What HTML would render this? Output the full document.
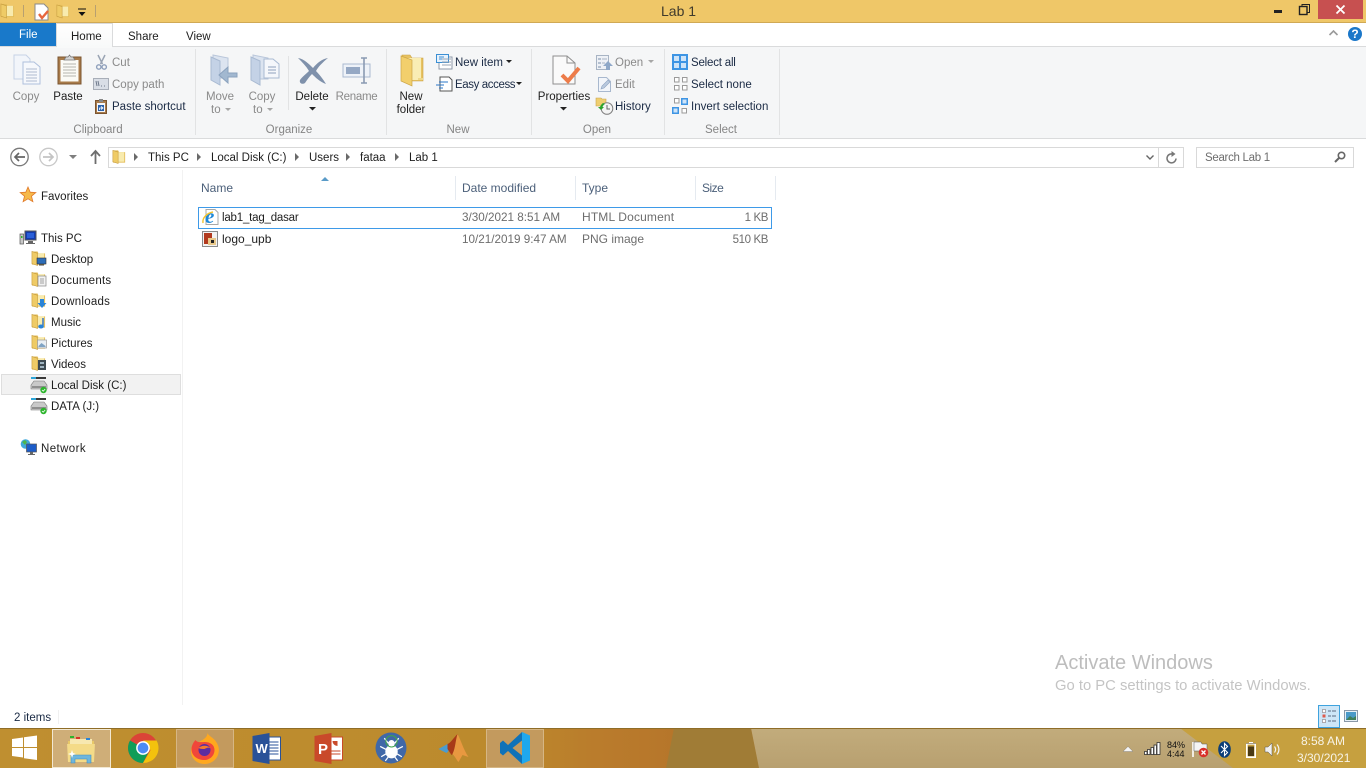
<!DOCTYPE html>
<html lang="en"><head><meta charset="utf-8"><title>Lab 1</title>
<style>
html,body{margin:0;padding:0;width:1366px;height:768px;overflow:hidden;background:#fff;font-family:"Liberation Sans",sans-serif;font-size:12px;color:#1e1e1e}
.a{position:absolute}
.t{position:absolute;white-space:nowrap;line-height:16px;font-size:11.5px;color:#1e1e1e;margin-top:1px}
.f12{font-size:12px;margin-top:0}
.g{color:#8a8a8a}
.l{color:#858585}
.c{text-align:center;transform:translateX(-50%)}
.h{color:#4c607a;font-size:12px;margin-top:0}
.d{color:#6d6d6d}
.n{color:#1a2a44}
svg{position:absolute;overflow:visible}
</style></head><body>
<svg width="0" height="0" style="position:absolute"><defs>
<symbol id="fld" viewBox="0 0 16 16">
<path d="M1 1h6l1 2h7v12H1z" fill="#E3BC58"/>
<path d="M5 3h9v11H5z" fill="#F8EBAE"/>
<path d="M1 1l6 2v13L1 14z" fill="#EFCB66" stroke="#C49A3E" stroke-width=".6"/>
</symbol>
<symbol id="drv" viewBox="0 0 18 18">
<rect x="1" y="1" width="15" height="2" fill="#3a3a3a"/><rect x="1" y="1" width="5" height="2" fill="#2FA6D8"/>
<path d="M1 9l3-4h10l3 4v4H1z" fill="#C9C9C9" stroke="#777" stroke-width=".6"/>
<rect x="2" y="10" width="14" height="2" fill="#8f8f8f"/>
<circle cx="13.500" cy="14" r="3.200" fill="#2DB52D"/><path d="M12 14l1.200 1.200 2-2.200" stroke="#fff" stroke-width=".8" fill="none"/>
</symbol>
<linearGradient id="tb1" gradientUnits="userSpaceOnUse" x1="0" x2="700" y1="0" y2="0"><stop offset="0" stop-color="#BF8F30"/><stop offset=".72" stop-color="#BC8A2D"/><stop offset=".85" stop-color="#BA7C2C"/><stop offset="1" stop-color="#B5742A"/></linearGradient>
<linearGradient id="tb2" x1="0" x2="0" y1="0" y2="1"><stop offset="0" stop-color="#C2AC7C"/><stop offset="1" stop-color="#B8A070"/></linearGradient>
</defs></svg>

<!-- Title bar -->
<div class="a" style="left:0;top:0;width:1366px;height:22px;background:#EFC768"></div>
<div class="a" style="left:0;top:22px;width:1366px;height:1px;background:#D0A955"></div>
<svg style="left:0;top:2px" width="16" height="18"><use href="#fld" width="15" height="17"/></svg>
<div class="a" style="left:23px;top:5px;width:1px;height:12px;background:#B8A070"></div>
<svg style="left:34px;top:3px" width="16" height="18" viewBox="0 0 16 18"><path d="M1 1h9l4 4v12H1z" fill="#fff" stroke="#8a8a8a"/><path d="M5 11l3 4 6-7" fill="none" stroke="#E8663C" stroke-width="2.400"/></svg>
<svg style="left:56px;top:3px" width="15" height="17"><use href="#fld" width="14" height="16"/></svg>
<svg style="left:77px;top:8px" width="10" height="9"><path d="M1 1h8" stroke="#111"/><path d="M1.500 4h7L5 8z" fill="#111"/></svg>
<div class="a" style="left:95px;top:5px;width:1px;height:12px;background:#B8A070"></div>
<div class="t" style="left:661px;top:3px;font-size:14px;color:#3f3a2c;margin-top:0">Lab 1</div>
<div class="a" style="left:1274px;top:10px;width:8px;height:3px;background:#222"></div>
<svg style="left:1299px;top:4px" width="11" height="11"><path d="M3 2.500V.5h7.500v8H8" fill="none" stroke="#222"/><rect x=".5" y="2.500" width="7.500" height="8" fill="none" stroke="#222" stroke-width="1.400"/></svg>
<div class="a" style="left:1318px;top:0;width:45px;height:19px;background:#C75050"></div>
<svg style="left:1336px;top:5px" width="9" height="9"><path d="M.5.5l8 8M8.500.5l-8 8" stroke="#fff" stroke-width="1.800"/></svg>

<!-- Tabs -->
<div class="a" style="left:0;top:23px;width:56px;height:23px;background:#1979CA"></div>
<div class="t" style="left:19px;top:26px;color:#fff">File</div>
<div class="a" style="left:56px;top:23px;width:57px;height:24px;border:1px solid #DADBDC;border-bottom:0;box-sizing:border-box;background:linear-gradient(#fff,#F8F9F9)"></div>
<div class="t" style="left:71px;top:28px">Home</div>
<div class="t" style="left:128px;top:28px">Share</div>
<div class="t" style="left:186px;top:28px">View</div>
<svg style="left:1329px;top:30px" width="9" height="6"><path d="M.5 5l4-4 4 4" fill="none" stroke="#9a9a9a" stroke-width="1.600"/></svg>
<div class="a" style="left:1348px;top:27px;width:14px;height:14px;border-radius:50%;background:#1B77C9;color:#fff;font-weight:bold;font-size:12px;line-height:14px;text-align:center">?</div>

<!-- Ribbon -->
<div class="a" style="left:0;top:46px;width:1366px;height:92px;background:#F5F6F7;border-top:1px solid #DADBDC;box-sizing:border-box"></div>
<div class="a" style="left:57px;top:46px;width:55px;height:2px;background:#F8F9F9"></div>
<div class="a" style="left:0;top:138px;width:1366px;height:1px;background:#DADBDC"></div>
<div class="a" style="left:195px;top:49px;width:1px;height:86px;background:#E2E3E4"></div>
<div class="a" style="left:386px;top:49px;width:1px;height:86px;background:#E2E3E4"></div>
<div class="a" style="left:531px;top:49px;width:1px;height:86px;background:#E2E3E4"></div>
<div class="a" style="left:664px;top:49px;width:1px;height:86px;background:#E2E3E4"></div>
<div class="a" style="left:779px;top:49px;width:1px;height:86px;background:#E2E3E4"></div>
<div class="a" style="left:288px;top:56px;width:1px;height:54px;background:#E2E3E4"></div>

<!-- Clipboard icons -->
<svg style="left:13px;top:54px" width="28" height="31" viewBox="0 0 28 31"><path d="M1 1h12l4 4v20H1z" fill="#F2F5FA" stroke="#C6D2E6"/><path d="M10 8h11l6 5v17H10z" fill="#F6F8FC" stroke="#AFC0DC"/><path d="M13 15h11M13 18h11M13 21h11M13 24h11M13 27h11" stroke="#AFBAD0"/></svg>
<svg style="left:57px;top:54px" width="25" height="31" viewBox="0 0 25 31"><rect x="1" y="3" width="23" height="27" fill="#A87B4A" stroke="#7C5530"/><rect x="3.500" y="6" width="18" height="21.500" fill="#FBFBF6"/><path d="M6 10h13M6 13h13M6 16h13M6 19h13M6 22h13" stroke="#B5B5AE"/><path d="M7 6l2-3h2l1.500-2 1.500 2h2l2 3z" fill="#D6D6D6" stroke="#777" stroke-width=".7"/></svg>
<svg style="left:96px;top:55px" width="11" height="15" viewBox="0 0 11 15"><path d="M2 0l4.500 9M9 0L4.500 9" stroke="#9AA4B4" stroke-width="1.500"/><circle cx="2.800" cy="12" r="2.200" fill="none" stroke="#8FA0BC" stroke-width="1.400"/><circle cx="8.200" cy="12" r="2.200" fill="none" stroke="#8FA0BC" stroke-width="1.400"/></svg>
<div class="t g" style="left:112px;top:54px">Cut</div>
<svg style="left:93px;top:78px" width="16" height="12" viewBox="0 0 16 12"><rect x=".5" y=".5" width="15" height="11" fill="#D9DEE6" stroke="#A8AEB8"/><path d="M3 3l1 5M5 3l1 5M8 8h1M11 8h1" stroke="#6F7A8C"/></svg>
<div class="t g" style="left:112px;top:76px">Copy path</div>
<svg style="left:95px;top:99px" width="12" height="15" viewBox="0 0 12 15"><rect x=".5" y="1.500" width="11" height="13" fill="#A87B4A" stroke="#7C5530"/><rect x="2" y="4" width="8" height="9" fill="#F5F6FA"/><rect x="3" y="6" width="6" height="6" fill="#2A60A8"/><path d="M4.500 11V9h2.500M6 7.500L8 9 6 10.500" fill="none" stroke="#fff" stroke-width=".8"/><rect x="4" y="0" width="4" height="3" fill="#888"/></svg>
<div class="t n" style="left:112px;top:98px">Paste shortcut</div>
<div class="t g c" style="left:26px;top:88px">Copy</div>
<div class="t c" style="left:68px;top:88px">Paste</div>
<div class="t l c" style="left:98px;top:121px">Clipboard</div>

<!-- Organize icons -->
<svg style="left:210px;top:54px" width="28" height="33" viewBox="0 0 28 33"><path d="M3 1l15 3v20H3z" fill="#DCE4F0" stroke="#B9C6DA"/><path d="M1 3l9 4v24l-9-5z" fill="#C4D2E6" stroke="#A9BAD2"/><path d="M27 19h-9v-6l-9 8 9 8v-6h9z" fill="#A2B8D0" stroke="#8BA2BE"/></svg>
<svg style="left:250px;top:54px" width="30" height="33" viewBox="0 0 30 33"><path d="M3 1l15 3v21H3z" fill="#DCE4F0" stroke="#B9C6DA"/><path d="M1 3l9 4v24l-9-5z" fill="#C4D2E6" stroke="#A9BAD2"/><path d="M14 5h9l6 5v14H14z" fill="#F5F7FB" stroke="#A9BAD2"/><path d="M18 13h8M18 16h8M18 19h8" stroke="#8EA2BE"/></svg>
<svg style="left:298px;top:57px" width="30" height="28" viewBox="0 0 30 28"><path d="M0 1C6 2 11 7 15 11 19 6 24 2 30 1 25 5 20 10 18 14c3 3 7 8 10 13C22 25 17 20 14 17 11 20 9 23 7 26c-3 2-6 0-5-3 2-3 6-6 9-9C8 9 4 5 0 1z" fill="#7F91AB"/></svg>
<svg style="left:342px;top:57px" width="30" height="27" viewBox="0 0 30 27"><rect x="1" y="7" width="27" height="13" fill="#EEF2F8" stroke="#AAB9D0"/><rect x="4" y="10" width="14" height="7" fill="#95A8C4"/><path d="M19 1h6M22 1v25M19 26h6" stroke="#8A9AB2" stroke-width="1.600"/></svg>
<div class="t g c" style="left:220px;top:88px">Move</div>
<div class="t g" style="left:211px;top:101px">to</div>
<svg style="left:225px;top:108px" width="6" height="4"><path d="M0 0h6L3 3z" fill="#A6A6A6"/></svg>
<div class="t g c" style="left:262px;top:88px">Copy</div>
<div class="t g" style="left:253px;top:101px">to</div>
<svg style="left:267px;top:108px" width="6" height="4"><path d="M0 0h6L3 3z" fill="#A6A6A6"/></svg>
<div class="t c" style="left:312px;top:88px">Delete</div>
<svg style="left:309px;top:107px" width="7" height="4"><path d="M0 0h7L3.500 3.500z" fill="#222"/></svg>
<div class="t g c" style="left:356.500px;top:88px;letter-spacing:-.3px">Rename</div>
<div class="t l c" style="left:289px;top:121px">Organize</div>

<!-- New -->
<svg style="left:400px;top:54px" width="24" height="33" viewBox="0 0 24 33"><path d="M2 1h8l2 3h11v23H2z" fill="#E7C262" stroke="#C9A040" stroke-width=".6"/><path d="M6 4h15v22H6z" fill="#F9EDB4"/><path d="M1 2l11 4v26L1 27z" fill="#F2CF6C" stroke="#CDA648" stroke-width=".7"/><rect x="18" y="24" width="5" height="2" fill="#EFD98A"/></svg>
<svg style="left:436px;top:54px" width="17" height="16" viewBox="0 0 17 16"><rect x="3" y="3" width="13" height="12" fill="#fff" stroke="#8F9AAA"/><rect x=".5" y=".5" width="12" height="8" fill="#E8F2FB" stroke="#3B8FD4"/><path d="M6 5h9M6 8h9M6 11h9" stroke="#9AA5B4"/><path d="M3 3h5M3 5h3" stroke="#3B8FD4"/></svg>
<div class="t n" style="left:455px;top:54px">New item</div>
<svg style="left:506px;top:60px" width="6" height="4"><path d="M0 0h6L3 3z" fill="#222"/></svg>
<svg style="left:436px;top:76px" width="17" height="16" viewBox="0 0 17 16"><path d="M4 1h9l3 3v11H4z" fill="#fff" stroke="#555"/><path d="M0 9h8M3 6h9M3 12h4" stroke="#2A77C8" stroke-width="1.100"/></svg>
<div class="t n" style="left:455px;top:76px;letter-spacing:-.4px">Easy access</div>
<svg style="left:516px;top:82px" width="6" height="4"><path d="M0 0h6L3 3z" fill="#222"/></svg>
<div class="t c" style="left:411px;top:88px">New</div>
<div class="t c" style="left:411px;top:101px">folder</div>
<div class="t l c" style="left:458px;top:121px">New</div>

<!-- Open -->
<svg style="left:552px;top:56px" width="30" height="30" viewBox="0 0 30 30"><path d="M1 0h14l8 7v21H1z" fill="#FAFAFA" stroke="#8F8F8F"/><path d="M15 0v7h8" fill="none" stroke="#8F8F8F"/><path d="M10 19l6 6L27 12" fill="none" stroke="#ED7C4A" stroke-width="4"/></svg>
<div class="t c" style="left:564px;top:88px">Properties</div>
<svg style="left:560px;top:107px" width="7" height="4"><path d="M0 0h7L3.500 3.500z" fill="#222"/></svg>
<svg style="left:596px;top:55px" width="17" height="15" viewBox="0 0 17 15"><rect x=".5" y=".5" width="12" height="14" fill="#EEF1F6" stroke="#A8B4C4"/><path d="M2 3h3v2H2zM2 7h3v2H2zM2 11h3v2H2z" fill="#B4C0D0"/><path d="M6 4h5M6 8h3" stroke="#A8B4C4"/><path d="M12 6l5 5h-3v4h-4v-4H7z" fill="#8FA8C8"/></svg>
<div class="t g" style="left:615px;top:54px">Open</div>
<svg style="left:648px;top:60px" width="6" height="4"><path d="M0 0h6L3 3z" fill="#A6A6A6"/></svg>
<svg style="left:598px;top:77px" width="13" height="15" viewBox="0 0 13 15"><path d="M.5.5h8l4 4v10H.5z" fill="#F2F5FA" stroke="#A8B8CE"/><path d="M3 12l1-3 6-6 2 2-6 6z" fill="#B9C9DE" stroke="#8DA2C0" stroke-width=".6"/></svg>
<div class="t g" style="left:615px;top:76px">Edit</div>
<svg style="left:596px;top:98px" width="18" height="17" viewBox="0 0 18 17"><path d="M0 0h5l1 1h4v7H0z" fill="#EFCF70" stroke="#C9A24C" stroke-width=".6"/><circle cx="11" cy="10.500" r="5.800" fill="#F4F4F4" stroke="#7F7F7F"/><path d="M11 7v4h3" fill="none" stroke="#666"/><path d="M2 9l3 3 3-3H6.500C7 7.500 8 6.500 9 6L7 5C5.500 6 4.500 7.500 4 9z" fill="#2DA32D"/></svg>
<div class="t n" style="left:615px;top:98px">History</div>
<div class="t l c" style="left:597px;top:121px">Open</div>

<!-- Select -->
<svg style="left:672px;top:54px" width="16" height="16" viewBox="0 0 16 16"><rect width="16" height="16" fill="#3E95E4"/><rect x="2" y="2" width="5" height="5" fill="#CFE4F8"/><rect x="9" y="2" width="5" height="5" fill="#CFE4F8"/><rect x="2" y="9" width="5" height="5" fill="#CFE4F8"/><rect x="9" y="9" width="5" height="5" fill="#CFE4F8"/></svg>
<div class="t n" style="left:691px;top:54px;letter-spacing:-.2px">Select all</div>
<svg style="left:674px;top:77px" width="14" height="14" viewBox="0 0 14 14"><g fill="#fff" stroke="#9A9A9A"><rect x=".5" y=".5" width="4.500" height="4.500"/><rect x="8.500" y=".5" width="4.500" height="4.500"/><rect x=".5" y="8.500" width="4.500" height="4.500"/><rect x="8.500" y="8.500" width="4.500" height="4.500"/></g></svg>
<div class="t n" style="left:691px;top:76px">Select none</div>
<svg style="left:672px;top:98px" width="16" height="16" viewBox="0 0 16 16"><rect x="2.500" y=".5" width="4.500" height="4.500" fill="#fff" stroke="#9A9A9A"/><rect x="9" y="0" width="7" height="7" fill="#3E95E4"/><rect x="10.500" y="1.500" width="4" height="4" fill="#CFE4F8"/><rect x="0" y="9" width="7" height="7" fill="#3E95E4"/><rect x="1.500" y="10.500" width="4" height="4" fill="#CFE4F8"/><rect x="10" y="10.500" width="4.500" height="4.500" fill="#fff" stroke="#9A9A9A"/></svg>
<div class="t n" style="left:691px;top:98px">Invert selection</div>
<div class="t l c" style="left:721px;top:121px">Select</div>

<!-- Address row -->
<svg style="left:10px;top:147px" width="20" height="20" viewBox="0 0 20 20"><circle cx="9.500" cy="10" r="8.700" fill="#fff" stroke="#7A7A7A" stroke-width="1.300"/><path d="M15 10H5M9 6l-4 4 4 4" fill="none" stroke="#666" stroke-width="1.700"/></svg>
<svg style="left:39px;top:147px" width="20" height="20" viewBox="0 0 20 20"><circle cx="9.500" cy="10" r="8.700" fill="#fff" stroke="#C8C8C8" stroke-width="1.300"/><path d="M4 10h10M10 6l4 4-4 4" fill="none" stroke="#C4C4C4" stroke-width="1.700"/></svg>
<svg style="left:69px;top:155px" width="8" height="5"><path d="M0 0h8L4 4z" fill="#7F7F7F"/></svg>
<svg style="left:90px;top:150px" width="11" height="14" viewBox="0 0 11 14"><path d="M5.500 14V2M1 6l4.500-5L10 6" fill="none" stroke="#6D6D6D" stroke-width="1.800"/></svg>
<div class="a" style="left:108px;top:147px;width:1076px;height:21px;border:1px solid #D9D9D9;box-sizing:border-box;background:#fff"></div>
<div class="a" style="left:1158px;top:147px;width:1px;height:21px;background:#D9D9D9"></div>
<svg style="left:112px;top:148px" width="15" height="18"><use href="#fld" width="14" height="17"/></svg>
<svg style="left:134px;top:153px" width="5" height="8"><path d="M0 0l4 4-4 4z" fill="#6a6a6a"/></svg>
<div class="t" style="left:148px;top:149px">This PC</div>
<svg style="left:197px;top:153px" width="5" height="8"><path d="M0 0l4 4-4 4z" fill="#6a6a6a"/></svg>
<div class="t" style="left:211px;top:149px">Local Disk (C:)</div>
<svg style="left:295px;top:153px" width="5" height="8"><path d="M0 0l4 4-4 4z" fill="#6a6a6a"/></svg>
<div class="t" style="left:309px;top:149px">Users</div>
<svg style="left:346px;top:153px" width="5" height="8"><path d="M0 0l4 4-4 4z" fill="#6a6a6a"/></svg>
<div class="t" style="left:360px;top:149px">fataa</div>
<svg style="left:395px;top:153px" width="5" height="8"><path d="M0 0l4 4-4 4z" fill="#6a6a6a"/></svg>
<div class="t" style="left:409px;top:149px">Lab 1</div>
<svg style="left:1146px;top:155px" width="8" height="5"><path d="M.5.500L4 4 7.500.5" fill="none" stroke="#666" stroke-width="1.400"/></svg>
<svg style="left:1166px;top:151px" width="11" height="13" viewBox="0 0 11 13"><path d="M7.800 3.500A4.500 4.500 0 1 0 10 7.500" fill="none" stroke="#777" stroke-width="1.500"/><path d="M5.500 0v6l4-3z" fill="#777"/></svg>
<div class="a" style="left:1196px;top:147px;width:158px;height:21px;border:1px solid #D9D9D9;box-sizing:border-box"></div>
<div class="t d" style="left:1205px;top:149px;letter-spacing:-.3px">Search Lab 1</div>
<svg style="left:1334px;top:151px" width="12" height="12" viewBox="0 0 12 12"><circle cx="7.500" cy="4.500" r="3.200" fill="none" stroke="#666" stroke-width="1.600"/><path d="M5 7l-4 4" stroke="#666" stroke-width="2"/></svg>

<!-- Nav pane -->
<div class="a" style="left:182px;top:170px;width:1px;height:535px;background:#F2F2F2"></div>
<svg style="left:20px;top:187px" width="16" height="16" viewBox="0 0 16 16"><path d="M8 0l2.200 5.200 5.600.4-4.300 3.600 1.400 5.500L8 11.800l-4.900 2.900 1.400-5.500L.2 5.600l5.600-.4z" fill="#F6B94A" stroke="#E0792A" stroke-width=".8"/></svg>
<div class="t" style="left:41px;top:188px">Favorites</div>
<svg style="left:20px;top:230px" width="17" height="16" viewBox="0 0 17 16"><rect x="5" y="1" width="11" height="9" fill="#123CB0" stroke="#555"/><rect x="7" y="3" width="7" height="5" fill="#2A5FD8"/><rect x="0" y="4" width="3.500" height="10" fill="#C8C8C8" stroke="#555" stroke-width=".7"/><rect x="1" y="6" width="1.500" height="2" fill="#2DB52D"/><path d="M8 11h5v2h2v1H6v-1h2z" fill="#666"/></svg>
<div class="t" style="left:41px;top:230px">This PC</div>

<svg style="left:31px;top:250px" width="16" height="17"><use href="#fld" width="15" height="16"/><rect x="6" y="8" width="9" height="6" fill="#2D6DB8" stroke="#333" stroke-width=".6"/><path d="M8 15h5" stroke="#444"/></svg>
<div class="t" style="left:51px;top:251px">Desktop</div>
<svg style="left:31px;top:271px" width="16" height="17"><use href="#fld" width="15" height="16"/><rect x="7" y="5" width="8" height="10" fill="#F2F2F2" stroke="#888" stroke-width=".7"/><path d="M9 8h4M9 10h4M9 12h4" stroke="#888" stroke-width=".7"/></svg>
<div class="t" style="left:51px;top:272px;letter-spacing:.25px">Documents</div>
<svg style="left:31px;top:292px" width="16" height="17"><use href="#fld" width="15" height="16"/><path d="M9 7h4v4h2.500L11 16l-4.500-5H9z" fill="#2A84D8"/></svg>
<div class="t" style="left:51px;top:293px;letter-spacing:.25px">Downloads</div>
<svg style="left:31px;top:313px" width="16" height="17"><use href="#fld" width="15" height="16"/><path d="M12 5v8.500" stroke="#2A6DC0" stroke-width="1.400"/><ellipse cx="10" cy="13.500" rx="2.800" ry="2" fill="#2A84D8"/></svg>
<div class="t" style="left:51px;top:314px">Music</div>
<svg style="left:31px;top:334px" width="16" height="17"><use href="#fld" width="15" height="16"/><rect x="6.500" y="6" width="9" height="8" fill="#E8EEF4" stroke="#999" stroke-width=".7"/><path d="M7.500 12l3-3 4 3v1h-7z" fill="#7FA3C4"/></svg>
<div class="t" style="left:51px;top:335px">Pictures</div>
<svg style="left:31px;top:355px" width="16" height="17"><use href="#fld" width="15" height="16"/><rect x="7" y="5" width="8" height="10" fill="#3D4A52"/><path d="M9 7h4v2H9zM9 11h4v2H9z" fill="#9FB4C0"/></svg>
<div class="t" style="left:51px;top:356px">Videos</div>
<div class="a" style="left:1px;top:374px;width:180px;height:21px;background:#F2F2F2;border:1px solid #DEDEDE;box-sizing:border-box"></div>
<svg style="left:30px;top:376px" width="18" height="18"><use href="#drv" width="18" height="18"/></svg>
<div class="t" style="left:51px;top:377px">Local Disk (C:)</div>
<svg style="left:30px;top:397px" width="18" height="18"><use href="#drv" width="18" height="18"/></svg>
<div class="t" style="left:51px;top:398px">DATA (J:)</div>
<svg style="left:20px;top:439px" width="17" height="17" viewBox="0 0 17 17"><circle cx="5.500" cy="5" r="4.800" fill="#3FA8DC"/><path d="M2 3l3-2 2 2-2 3z" fill="#4DB54A"/><rect x="6.500" y="5" width="10" height="8" fill="#1C5CC8" stroke="#555" stroke-width=".7"/><path d="M10 13h3v2h2v1H8v-1h2z" fill="#666"/></svg>
<div class="t" style="left:41px;top:440px;letter-spacing:.4px">Network</div>

<!-- File list -->
<div class="t h" style="left:201px;top:180px">Name</div>
<svg style="left:321px;top:177px" width="8" height="4"><path d="M0 4l4-4 4 4z" fill="#5A9BC8"/></svg>
<div class="a" style="left:455px;top:176px;width:1px;height:24px;background:#E5EAF0"></div>
<div class="a" style="left:575px;top:176px;width:1px;height:24px;background:#E5EAF0"></div>
<div class="a" style="left:695px;top:176px;width:1px;height:24px;background:#E5EAF0"></div>
<div class="a" style="left:775px;top:176px;width:1px;height:24px;background:#E5EAF0"></div>
<div class="t h" style="left:462px;top:180px">Date modified</div>
<div class="t h" style="left:582px;top:180px">Type</div>
<div class="t h" style="left:702px;top:180px;letter-spacing:-.5px">Size</div>
<div class="a" style="left:198px;top:207px;width:574px;height:22px;border:1px solid #3E9AE8;box-sizing:border-box"></div>
<svg style="left:202px;top:209px" width="17" height="17" viewBox="0 0 17 17"><path d="M4 .5h9l3 3v12H4z" fill="#fff" stroke="#A8A8A8"/><text x="3" y="14" font-family="Liberation Serif,serif" font-style="italic" font-weight="bold" font-size="21" fill="#1E88D8">e</text><path d="M1 14C0 9 5 4 11 3" fill="none" stroke="#F2C230" stroke-width="1.400"/></svg>
<div class="t" style="left:222px;top:209px;letter-spacing:-.2px">lab1_tag_dasar</div>
<div class="t d" style="left:462px;top:209px;font-size:11.700px">3/30/2021 8:51 AM</div>
<div class="t d f12" style="left:582px;top:209px;letter-spacing:.15px">HTML Document</div>
<div class="t d" style="right:598px;top:209px;letter-spacing:-.4px">1 KB</div>
<svg style="left:202px;top:231px" width="16" height="16" viewBox="0 0 16 16"><rect x=".5" y=".5" width="15" height="15" fill="#F2F2F2" stroke="#8A8A8A"/><rect x="2" y="2" width="8" height="11" fill="#B23A1E"/><rect x="6" y="7" width="8" height="7" fill="#E8C88A"/><rect x="9" y="9" width="3" height="3" fill="#222"/></svg>
<div class="t f12" style="left:222px;top:231px">logo_upb</div>
<div class="t d" style="left:462px;top:231px;font-size:11.700px">10/21/2019 9:47 AM</div>
<div class="t d f12" style="left:582px;top:231px">PNG image</div>
<div class="t d" style="right:598px;top:231px;letter-spacing:-.4px">510 KB</div>

<!-- Activate -->
<div class="t" style="left:1055px;top:650px;font-size:20px;line-height:24px;color:#BDBDBD">Activate Windows</div>
<div class="t" style="left:1055px;top:676px;font-size:14.800px;line-height:18px;color:#C4C4C4">Go to PC settings to activate Windows.</div>

<!-- Status bar -->
<div class="t n" style="left:14px;top:709px">2 items</div>
<div class="a" style="left:58px;top:710px;width:1px;height:14px;background:#F0F0F0"></div>
<div class="a" style="left:1318px;top:705px;width:22px;height:23px;background:#CDE6F7;border:1px solid #3FA3DE;box-sizing:border-box"></div>
<svg style="left:1322px;top:709px" width="15" height="15" viewBox="0 0 15 15"><rect x=".5" y=".5" width="3" height="3" fill="#fff" stroke="#8A7A7A" stroke-width=".6"/><rect x=".5" y="5.500" width="3" height="3" fill="#E05A4A"/><rect x=".5" y="10.500" width="3" height="3" fill="#fff" stroke="#8A7A7A" stroke-width=".6"/><path d="M6 2h3M10 2h4M6 7h3M10 7h4M6 12h3M10 12h4" stroke="#5A6A80"/></svg>
<svg style="left:1344px;top:710px" width="14" height="12" viewBox="0 0 14 12"><rect x=".5" y=".5" width="13" height="11" fill="#E8F0F6" stroke="#8A98A8"/><rect x="2" y="2" width="10" height="8" fill="#4A9AC8"/><path d="M2 10l4-4 3 2 3-2v4z" fill="#3F7F5A"/></svg>

<!-- Taskbar -->
<svg style="left:0;top:728px" width="1366" height="40" viewBox="0 0 1366 40">
<rect width="760" height="40" fill="url(#tb1)"/>
<path d="M674 0H751L759 40H666z" fill="#A07C36"/>
<path d="M751 0H1366V40H759z" fill="url(#tb2)"/>
<path d="M1180 0H1366V40H1233z" fill="#C6A03F"/>
<rect width="1366" height="1" fill="#8F6D28"/>
</svg>
<svg style="left:12px;top:735px" width="26" height="26" viewBox="0 0 26 26"><path d="M0 4l11-1.500V12H0zM12 2.300L25 .5V12H12zM0 13h11v9.500L0 21zM12 13h13v12l-13-1.800z" fill="#fff"/></svg>
<div class="a" style="left:52px;top:729px;width:59px;height:39px;background:#CFAE78;border:1px solid #F2E8D2;box-sizing:border-box"></div>
<svg style="left:66px;top:735px" width="30" height="29" viewBox="0 0 30 29"><path d="M2 6h26v21H2z" fill="#E8C868"/><path d="M4 4h22v5H4z" fill="#F7E8B0"/><rect x="4" y="1" width="4" height="2" fill="#2DB52D"/><rect x="10" y="2" width="4" height="2" fill="#D8342A"/><rect x="20" y="3" width="4" height="2" fill="#2A84D8"/><path d="M1 9h28l-1 18H2z" fill="#F6DE8E" opacity=".85"/><path d="M5 20h20v8h-4v-4H9v4H5z" fill="#6FB6DC" stroke="#3F8FC4" stroke-width=".6"/><path d="M6 15l1 3 3 1-3 1-1 3-1-3-3-1 3-1z" fill="#fff"/></svg>

<svg style="left:128px;top:733px" width="30" height="30" viewBox="0 0 28 28"><circle cx="14" cy="14" r="14" fill="#DB4437"/><path d="M14 14L1.900 7A14 14 0 0 0 14 28l6-12z" fill="#0F9D58"/><path d="M14 7h12.600A14 14 0 0 1 14 28l7-12z" fill="#F4C20D"/><circle cx="14" cy="14" r="6.400" fill="#fff"/><circle cx="14" cy="14" r="5" fill="#4C8BF5"/></svg>

<div class="a" style="left:176px;top:729px;width:58px;height:39px;background:#C39A5E;border:1px solid #D6B684;box-sizing:border-box"></div>
<svg style="left:190px;top:733px" width="30" height="31" viewBox="0 0 29 31"><path d="M17 0c1 3 5 4 8 8 3 4 4 8 3 12-1 6-7 11-14 11S1 26 .5 19C.2 14 3 10 5 7c0 2 1 3 2 4 1-2 3-3 5-4 3-2 5-4 5-7z" fill="#FFA81E"/><path d="M1 16c0-3 2-7 4-9 2 3 6 2 9 2 6 0 10 3 10 8 0 6-5 10-10 10-7 0-13-4-13-11z" fill="#F0473A"/><circle cx="14" cy="17" r="6" fill="#5B2DA0"/><path d="M8 15c3-3 9-3 12 0-3-1-4 0-6 1-2 0-4 0-6-1z" fill="#F47A2C"/></svg>

<svg style="left:252px;top:733px" width="30" height="31" viewBox="0 0 29 31"><rect x="13" y="4" width="15" height="23" fill="#fff" stroke="#2A5298"/><path d="M16 9h10M16 12h10M16 15h10M16 18h10M16 21h10" stroke="#2A5298"/><path d="M0 3l17-3v31L0 28z" fill="#2A5298"/><text x="3" y="20" font-family="Liberation Sans,sans-serif" font-weight="bold" font-size="13" fill="#fff">W</text></svg>
<svg style="left:314px;top:733px" width="30" height="31" viewBox="0 0 29 31"><rect x="13" y="4" width="15" height="23" fill="#fff" stroke="#C94A2A"/><path d="M18 8a5 5 0 0 0 5 5V8z" fill="#C94A2A"/><path d="M16 18h10M16 21h10" stroke="#C94A2A"/><path d="M0 3l17-3v31L0 28z" fill="#C9492A"/><text x="3.500" y="21" font-family="Liberation Sans,sans-serif" font-weight="bold" font-size="15" fill="#fff">P</text></svg>
<svg style="left:375px;top:732px" width="32" height="32" viewBox="0 0 31 31"><circle cx="15.500" cy="15.500" r="15" fill="#4068A8"/><ellipse cx="16" cy="19" rx="6" ry="6.500" fill="#fff"/><circle cx="16" cy="11" r="3.200" fill="#fff"/><path d="M9 6l4 5M23 6l-4 5M5 14l6 3M27 14l-6 3M6 24l5-3M26 24l-5-3M10 28l3-4M22 28l-3-4" stroke="#fff" stroke-width="1.200"/><circle cx="16" cy="9" r="5.500" fill="none" stroke="#3FA64A" stroke-width="1"/></svg>
<svg style="left:438px;top:733px" width="32" height="30" viewBox="0 0 31 30"><path d="M0 16l9-5 4 4-5 5z" fill="#4A9CD0"/><path d="M9 11c3-1 6-6 10-10l2 7-3 10-5 4-4-6z" fill="#A83A18"/><path d="M19 1c3 5 6 16 11 23l-6-2-4 7c-2-2-3-5-6-8 3-6 3-14 5-20z" fill="#E89840"/></svg>
<div class="a" style="left:486px;top:729px;width:58px;height:39px;background:#C39A5E;border:1px solid #D6B684;box-sizing:border-box"></div>
<svg style="left:499px;top:732px" width="32" height="32" viewBox="0 0 30 32"><path d="M8 13L22 0v8.500L12.500 16 22 23.500V32L8 19l-5 4.500L0 21v-10l3-2.500z" fill="#0F72B8"/><path d="M22 0l8 3.500v25L22 32z" fill="#1FA8EE"/></svg>

<!-- Tray -->
<svg style="left:1123px;top:746px" width="10" height="6"><path d="M0 5.500L5 .5l5 5z" fill="#F4F4F4" stroke="#777" stroke-width=".4"/></svg>
<svg style="left:1144px;top:742px" width="17" height="13" viewBox="0 0 17 13"><g fill="#fff" stroke="#333" stroke-width=".8"><rect x=".5" y="9.500" width="2.500" height="3"/><rect x="3.500" y="7.500" width="2.500" height="5"/><rect x="7" y="5.500" width="2.500" height="7"/><rect x="10" y="3" width="2.500" height="9.500"/><rect x="13" y=".5" width="3" height="12"/></g></svg>
<div class="t" style="left:1167px;top:740px;font-size:9px;line-height:10px;color:#111;margin-top:0">84%</div>
<div class="t" style="left:1167px;top:749px;font-size:9px;line-height:10px;color:#111;margin-top:0">4:44</div>
<svg style="left:1192px;top:741px" width="17" height="17" viewBox="0 0 17 17"><path d="M1 1v15" stroke="#fff" stroke-width="1.600"/><path d="M2 1h7l1 2h5v7H2z" fill="#F4F4F4" stroke="#555" stroke-width=".5"/><circle cx="11.500" cy="11.500" r="4.800" fill="#D8302A"/><path d="M9.500 9.500l4 4M13.500 9.500l-4 4" stroke="#fff" stroke-width="1.300"/></svg>
<svg style="left:1218px;top:741px" width="13" height="17" viewBox="0 0 13 17"><ellipse cx="6.500" cy="8.500" rx="6.300" ry="8.300" fill="#0B3D78"/><path d="M3 5l6.500 6.500-3 3V2.500l3 3L3 12" fill="none" stroke="#fff" stroke-width="1.100"/></svg>
<svg style="left:1246px;top:742px" width="10" height="16" viewBox="0 0 10 16"><rect x="3" y="0" width="4" height="2" fill="#fff"/><rect x=".8" y="1.800" width="8.400" height="13.400" fill="none" stroke="#fff" stroke-width="1.600"/><rect x="2" y="4.500" width="6" height="9.500" fill="#4A3A14"/><path d="M0 1.500h10" stroke="#4A3A14" stroke-width=".5"/></svg>
<svg style="left:1264px;top:742px" width="17" height="15" viewBox="0 0 17 15"><path d="M1 5h3l4-4v13l-4-4H1z" fill="#F0F0F0" stroke="#555" stroke-width=".5"/><path d="M10.500 4.500c1.500 2 1.500 4 0 6M13 2.500c2.500 3 2.500 7 0 10" fill="none" stroke="#F4F4F4" stroke-width="1.200"/></svg>
<div class="t f12" style="left:1301px;top:733px;color:#F7F3E6">8:58 AM</div>
<div class="t f12" style="left:1297px;top:750px;color:#F7F3E6">3/30/2021</div>
</body></html>
